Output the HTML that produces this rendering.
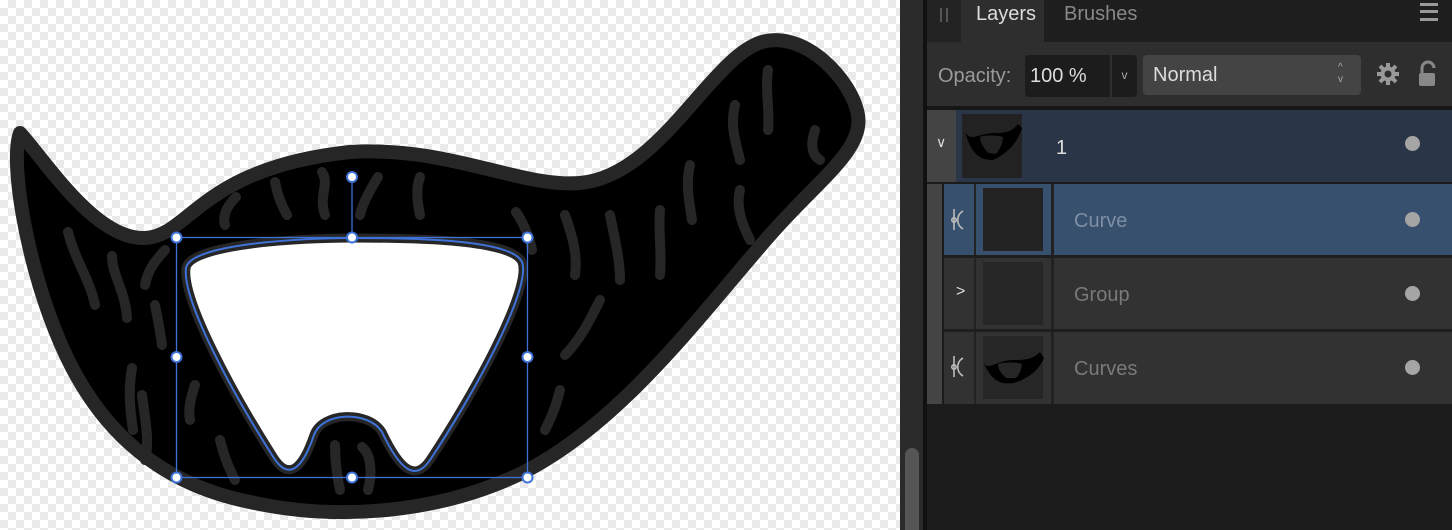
<!DOCTYPE html>
<html><head><meta charset="utf-8"><style>
*{margin:0;padding:0;box-sizing:border-box}
html,body{width:1452px;height:530px;overflow:hidden}
body{position:relative;font-family:"Liberation Sans",sans-serif;background:#1b1b1b}
.canvas{position:absolute;left:0;top:0;width:900px;height:530px;background-color:#fff;background-image:linear-gradient(45deg,#eaeaea 25%,transparent 25%,transparent 75%,#eaeaea 75%),linear-gradient(45deg,#eaeaea 25%,transparent 25%,transparent 75%,#eaeaea 75%);background-size:16px 16px;background-position:0 0,8px 8px}
.abs{position:absolute}
.t{color:#8a8a8a;font-size:20px}
.dot{position:absolute;width:15px;height:15px;border-radius:50%;background:#a5a5a5;left:1405px}
</style></head><body>
<div class="canvas"></div>
<svg class="abs" style="left:0;top:0" width="900" height="530">
<path d="M20,133 C45,160 95,240 145,238 C190,236 200,168 350,152 C450,146 520,188 580,183 C660,176 710,58 762,42 C805,30 852,80 858,115 C864,150 818,180 770,235 C700,315 620,425 520,474 C440,512 340,522 250,502 C150,482 90,420 55,330 C25,255 10,160 20,133 Z" fill="#000" stroke="#262626" stroke-width="14" stroke-linejoin="round"/>
<g stroke="#262626" stroke-width="10" stroke-linecap="round" fill="none">
<path d="M68,232 C75,260 90,280 95,305"/><path d="M112,256 C112,275 125,290 127,318"/><path d="M155,305 C158,320 160,330 162,345"/><path d="M132,368 C128,390 130,410 133,430"/><path d="M142,395 C145,420 150,440 145,460"/><path d="M145,285 C148,268 158,258 165,250"/>
<path d="M236,197 C228,205 222,215 225,225"/><path d="M275,182 C278,198 283,208 287,215"/><path d="M322,172 C330,185 318,195 325,215"/><path d="M378,177 C370,190 362,205 360,215"/><path d="M420,177 C415,190 418,205 420,215"/><path d="M516,212 C525,225 530,240 532,250"/><path d="M565,215 C572,235 578,255 575,275"/><path d="M610,215 C615,240 620,260 620,280"/><path d="M660,210 C658,230 662,250 660,275"/><path d="M690,165 C685,185 690,205 692,220"/><path d="M735,105 C730,125 735,140 740,160"/><path d="M768,70 C765,90 770,110 768,130"/><path d="M815,130 C810,145 812,155 820,160"/><path d="M740,190 C735,210 745,230 750,240"/><path d="M600,300 C590,320 580,340 565,355"/><path d="M560,390 C555,410 550,420 545,430"/><path d="M220,440 C225,460 230,470 235,480"/><path d="M335,445 C335,465 338,480 340,490"/><path d="M362,447 C372,455 372,475 368,490"/><path d="M195,385 C190,400 188,410 190,420"/>
</g>
<path d="M186,268 C190,244 300,238 352,238 C420,238 512,240 522,262 C532,290 470,400 430,460 C415,482 400,470 382,432 C368,410 322,412 314,435 C302,470 288,482 272,455 C232,392 182,300 186,268 Z" fill="#fff" stroke="#262626" stroke-width="9"/>
<path d="M186,268 C190,244 300,238 352,238 C420,238 512,240 522,262 C532,290 470,400 430,460 C415,482 400,470 382,432 C368,410 322,412 314,435 C302,470 288,482 272,455 C232,392 182,300 186,268 Z" fill="none" stroke="#3f72d8" stroke-width="2"/>
<g stroke="#3f72d8" stroke-width="1.3" fill="none"><rect x="176.5" y="237.5" width="351" height="240"/><line x1="352" y1="177" x2="352" y2="237"/></g>
<g fill="#fff" stroke="#3f72d8" stroke-width="2">
<circle cx="176.5" cy="237.5" r="5"/><circle cx="352" cy="237.5" r="5"/><circle cx="527.5" cy="237.5" r="5"/><circle cx="176.5" cy="357" r="5"/><circle cx="527.5" cy="357" r="5"/><circle cx="176.5" cy="477.5" r="5"/><circle cx="352" cy="477.5" r="5"/><circle cx="527.5" cy="477.5" r="5"/><circle cx="352" cy="177" r="5"/></g>
</svg>
<!-- side strip -->
<div class="abs" style="left:900px;top:0;width:23px;height:530px;background:#2b2b2b"></div>
<div class="abs" style="left:905px;top:448px;width:14px;height:82px;border-radius:7px 7px 0 0;background:#555"></div>
<div class="abs" style="left:923px;top:0;width:4px;height:530px;background:#111"></div>
<!-- header -->
<div class="abs" style="left:927px;top:0;width:525px;height:42px;background:#1e1e1e"></div>
<div class="abs" style="left:927px;top:0;width:34px;height:42px;background:#232323"></div>
<div class="abs" style="left:940px;top:8px;width:2px;height:14px;background:#555"></div><div class="abs" style="left:946px;top:8px;width:2px;height:14px;background:#555"></div>
<div class="abs" style="left:961px;top:0;width:83px;height:42px;background:#2e2e2e"></div>
<div class="abs" style="left:976px;top:3px;color:#ddd;font-size:20px">Layers</div>
<div class="abs" style="left:1064px;top:3px;color:#888;font-size:20px">Brushes</div>
<div class="abs" style="left:1420px;top:3px;width:18px;height:3px;background:#999;box-shadow:0 7px 0 #999,0 15px 0 #999"></div>
<!-- toolbar -->
<div class="abs" style="left:927px;top:42px;width:525px;height:64px;background:#2e2e2e"></div>
<div class="abs t" style="left:938px;top:65px;color:#9a9a9a">Opacity:</div>
<div class="abs" style="left:1025px;top:55px;width:85px;height:42px;background:#1c1c1c;border-radius:4px 0 0 4px"></div>
<div class="abs" style="left:1030px;top:65px;color:#ddd;font-size:20px">100 %</div>
<div class="abs" style="left:1112px;top:55px;width:25px;height:42px;background:#1c1c1c;border-radius:0 4px 4px 0;color:#aaa;font-size:12px;text-align:center;line-height:40px">v</div>
<div class="abs" style="left:1143px;top:55px;width:218px;height:40px;background:#444;border-radius:4px"></div>
<div class="abs" style="left:1153px;top:64px;color:#ddd;font-size:20px">Normal</div>
<div class="abs" style="left:1338px;top:62px;color:#aaa;font-size:10px;line-height:12px">^<br>v</div>
<svg class="abs" style="left:1376px;top:62px" width="24" height="24" viewBox="0 0 24 24"><g fill="#999"><circle cx="12" cy="12" r="7.5"/><g stroke="#999" stroke-width="4"><line x1="12" y1="1" x2="12" y2="23"/><line x1="1" y1="12" x2="23" y2="12"/><line x1="4" y1="4" x2="20" y2="20"/><line x1="20" y1="4" x2="4" y2="20"/></g></g><circle cx="12" cy="12" r="3.5" fill="#2e2e2e"/></svg>
<svg class="abs" style="left:1418px;top:60px" width="20" height="28"><path d="M4,14 V8 a6,6 0 0 1 12,0" fill="none" stroke="#888" stroke-width="3"/><rect x="1" y="13" width="16" height="13" rx="2" fill="#888"/></svg>
<div class="abs" style="left:927px;top:106px;width:525px;height:4px;background:#161616"></div>
<!-- row 1 -->
<div class="abs" style="left:927px;top:110px;width:525px;height:72px;background:#2a3547"></div>
<div class="abs" style="left:927px;top:110px;width:29px;height:72px;background:#444"></div>
<div class="abs" style="left:936px;top:134px;color:#ddd;font-size:14px">&#8744;</div>
<div class="abs" style="left:962px;top:114px;width:60px;height:64px;background:#222"></div>
<svg class="abs" style="left:963px;top:120px" width="60" height="50"><path d="M2,12 C8,22 14,14 30,13 C40,13 48,13 55,4 L59,8 C55,22 45,33 30,40 C15,40 8,32 2,12Z" fill="#000"/><path d="M17,17 C20,15 35,15 40,17 C40,24 36,30 33,34 L25,33 C21,28 17,23 17,17Z" fill="#222"/></svg>
<div class="abs" style="left:1056px;top:137px;color:#ddd;font-size:20px">1</div>
<div class="dot" style="top:136px"></div>
<div class="abs" style="left:927px;top:182px;width:525px;height:2px;background:#1b1b1b"></div>
<!-- indent strip -->
<div class="abs" style="left:927px;top:184px;width:15px;height:220px;background:#444"></div>
<!-- rows -->
<div class="abs" style="left:944px;top:184px;width:508px;height:71px;background:#36506e"></div>
<div class="abs" style="left:944px;top:258px;width:508px;height:71px;background:#323232"></div>
<div class="abs" style="left:944px;top:332px;width:508px;height:72px;background:#323232"></div>
<div class="abs" style="left:974px;top:184px;width:2px;height:220px;background:#222"></div>
<div class="abs" style="left:1051px;top:184px;width:3px;height:220px;background:#222"></div>
<div class="abs" style="left:979px;top:188px;width:71px;height:64px;background:#36506e"></div>
<div class="abs" style="left:983px;top:188px;width:60px;height:63px;background:#232323"></div>
<div class="abs" style="left:983px;top:262px;width:60px;height:63px;background:#262626"></div>
<div class="abs" style="left:983px;top:336px;width:60px;height:63px;background:#262626"></div>
<svg class="abs" style="left:984px;top:350px" width="60" height="40"><path d="M0,14 C6,20 14,10 30,10 C40,10 48,10 56,2 L60,8 C55,20 45,28 30,33 C15,35 8,30 0,14Z" fill="#000"/><path d="M14,14 C20,12 34,12 38,14 C37,22 34,26 32,28 L22,28 C18,24 14,20 14,14Z" fill="#262626"/></svg>
<svg class="abs" style="left:950px;top:208px" width="20" height="24"><g stroke="#bbb" stroke-width="1.6" fill="none"><line x1="4" y1="1" x2="4" y2="22"/><path d="M13,3 C6,7 6,17 13,21"/><circle cx="4" cy="12" r="2.2"/></g></svg>
<svg class="abs" style="left:950px;top:355px" width="20" height="24"><g stroke="#bbb" stroke-width="1.6" fill="none"><line x1="4" y1="1" x2="4" y2="22"/><path d="M13,3 C6,7 6,17 13,21"/><circle cx="4" cy="12" r="2.2"/></g></svg>
<div class="abs" style="left:956px;top:283px;color:#ddd;font-size:16px">&gt;</div>
<div class="abs t" style="left:1074px;top:210px;color:#7f8ea3">Curve</div>
<div class="abs t" style="left:1074px;top:284px;color:#7a7a7a">Group</div>
<div class="abs t" style="left:1074px;top:358px;color:#7a7a7a">Curves</div>
<div class="dot" style="top:212px"></div><div class="dot" style="top:286px"></div><div class="dot" style="top:360px"></div>
<div class="abs" style="left:944px;top:255px;width:508px;height:3px;background:#1e1e1e"></div>
<div class="abs" style="left:944px;top:329px;width:508px;height:3px;background:#1e1e1e"></div>
</body></html>
